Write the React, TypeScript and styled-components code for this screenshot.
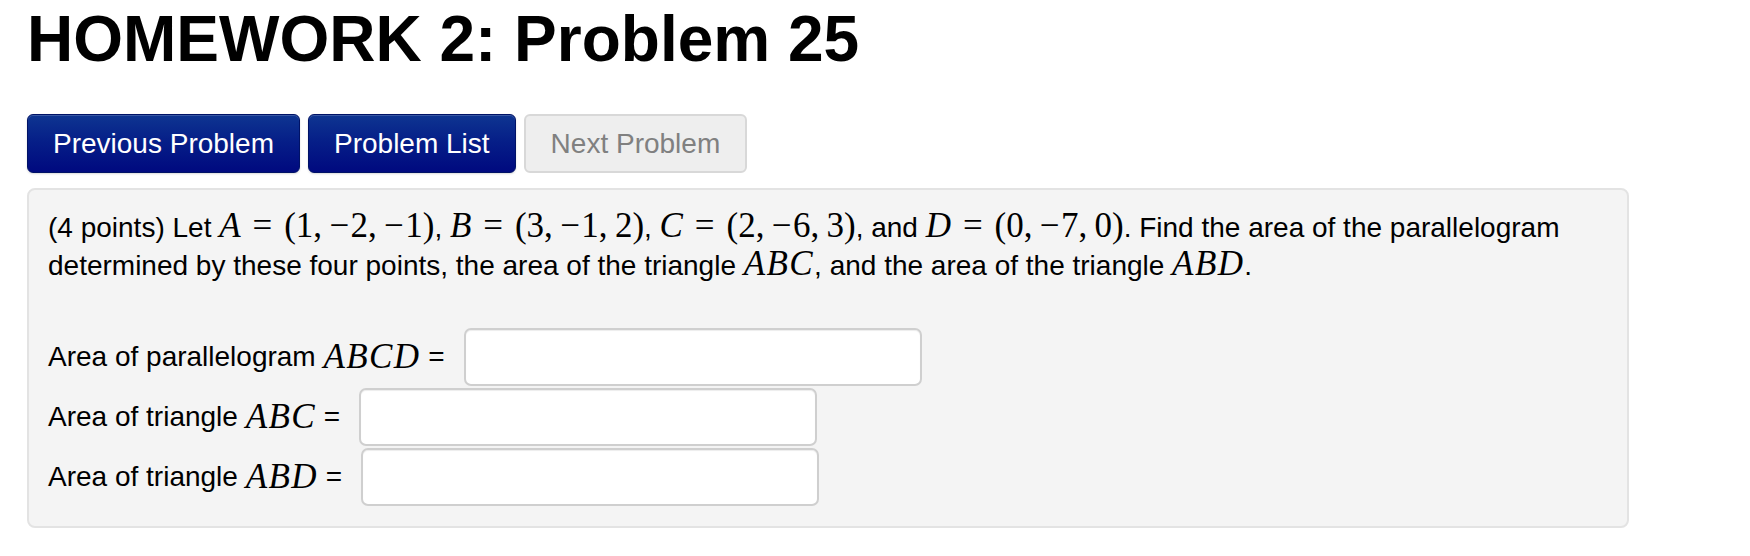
import React from "react";
import styled, { createGlobalStyle } from "styled-components";

const Global = createGlobalStyle`
  html, body {
    margin: 0;
    padding: 0;
    background: #ffffff;
  }
  body {
    font-family: "Liberation Sans", Helvetica, Arial, sans-serif;
    color: #000000;
  }
`;

const Page = styled.main`
  padding: 4px 27px 0;
`;

const Title = styled.h1`
  margin: 0;
  font-size: 64px;
  line-height: 70px;
  font-weight: 700;
  color: #000;
`;

const Nav = styled.nav`
  display: flex;
  gap: 8px;
  margin-top: 40px;
`;

const NavButton = styled.button<{ $disabled?: boolean }>`
  box-sizing: border-box;
  height: 59px;
  padding: 0 25px;
  border-radius: 6px;
  font-family: "Liberation Sans", Helvetica, Arial, sans-serif;
  font-size: 28px;
  line-height: 1;
  cursor: ${(p) => (p.$disabled ? "default" : "pointer")};
  color: ${(p) => (p.$disabled ? "#808080" : "#ffffff")};
  background: ${(p) =>
    p.$disabled
      ? "#eeeeee"
      : "linear-gradient(to bottom, #0e3591 0%, #061f88 45%, #00097f 100%)"};
  border: ${(p) => (p.$disabled ? "2px solid #d8d8d8" : "1px solid #001266")};
  box-shadow: ${(p) =>
    p.$disabled ? "none" : "inset 0 1px 0 rgba(255,255,255,0.18), 0 1px 2px rgba(0,0,0,0.15)"};
`;

const Well = styled.section`
  box-sizing: border-box;
  width: 1602px;
  margin-top: 15px;
  padding: 19px;
  background: #f4f4f4;
  border: 2px solid #e3e3e3;
  border-radius: 8px;
  font-size: 28px;
  line-height: 38px;
`;

const Statement = styled.p`
  margin: 0 0 42px;
  white-space: nowrap;
`;

const MathSpan = styled.span`
  font-family: "Liberation Serif", "Times New Roman", serif;
  font-size: 35px;
  line-height: 28px;
  white-space: nowrap;
`;

const Var = styled.i`
  font-style: italic;
  letter-spacing: 0.04em;
`;

const Rel = styled.span`
  margin: 0 0.34em 0 0.3em;
`;

const Comma = styled.span`
  margin-right: 0.21em;
`;

const Minus = styled.span`
  margin: 0 0.04em 0 0;
`;

const AnswerRow = styled.div`
  display: flex;
  align-items: center;
  height: 60px;
  white-space: pre;
`;

const AnswerInput = styled.input`
  box-sizing: border-box;
  width: 458px;
  height: 58px;
  margin-left: 19px;
  padding: 0 12px;
  border: 2px solid #cfcfcf;
  border-radius: 7px;
  background: #ffffff;
  box-shadow: inset 0 1px 1px rgba(0, 0, 0, 0.075);
  font-family: "Liberation Sans", Helvetica, Arial, sans-serif;
  font-size: 28px;
  outline: none;
`;

function Num({ value }: { value: string }) {
  if (value.startsWith("\u2212")) {
    return (
      <>
        <Minus>{"\u2212"}</Minus>
        {value.slice(1)}
      </>
    );
  }
  return <>{value}</>;
}

function Tuple({ values }: { values: string[] }) {
  return (
    <>
      (
      {values.map((v, i) => (
        <React.Fragment key={i}>
          <Num value={v} />
          {i < values.length - 1 && <Comma>,</Comma>}
        </React.Fragment>
      ))}
      )
    </>
  );
}

function Point({ name, values }: { name: string; values: string[] }) {
  return (
    <MathSpan>
      <Var>{name}</Var>
      <Rel>=</Rel>
      <Tuple values={values} />
    </MathSpan>
  );
}

function M({ children }: { children: string }) {
  return (
    <MathSpan>
      <Var>{children}</Var>
    </MathSpan>
  );
}

const answers = [
  { label: "Area of parallelogram ", math: "ABCD" },
  { label: "Area of triangle ", math: "ABC" },
  { label: "Area of triangle ", math: "ABD" },
];

export default function App() {
  return (
    <>
      <Global />
      <Page>
        <Title>HOMEWORK 2: Problem 25</Title>
        <Nav>
          <NavButton type="button">Previous Problem</NavButton>
          <NavButton type="button">Problem List</NavButton>
          <NavButton type="button" $disabled>
            Next Problem
          </NavButton>
        </Nav>
        <Well>
          <Statement>
            (4 points) Let <Point name="A" values={["1", "\u22122", "\u22121"]} />,{" "}
            <Point name="B" values={["3", "\u22121", "2"]} />,{" "}
            <Point name="C" values={["2", "\u22126", "3"]} />, and{" "}
            <Point name="D" values={["0", "\u22127", "0"]} />. Find the area of the parallelogram
            <br />
            determined by these four points, the area of the triangle <M>ABC</M>, and the area of
            the triangle <M>ABD</M>.
          </Statement>
          {answers.map((a, i) => (
            <AnswerRow key={i}>
              {a.label}
              <M>{a.math}</M>
              {" ="}
              <AnswerInput type="text" aria-label={`${a.label}${a.math}`} />
            </AnswerRow>
          ))}
        </Well>
      </Page>
    </>
  );
}
